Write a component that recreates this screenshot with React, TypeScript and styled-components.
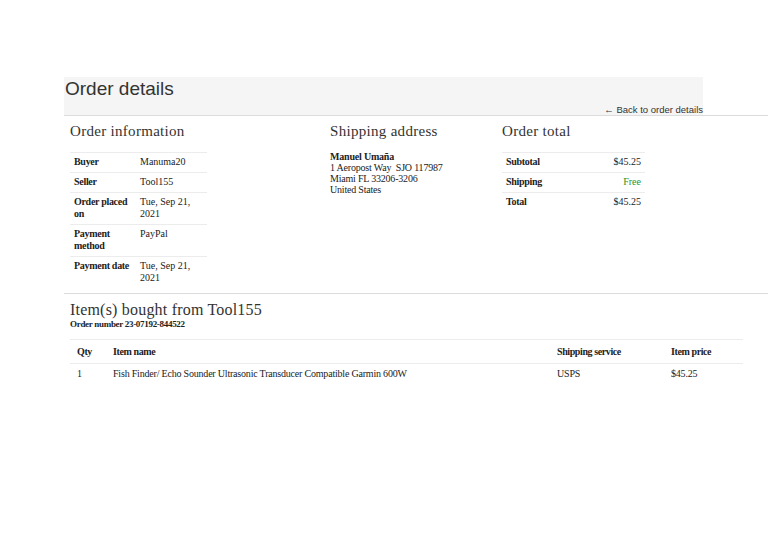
import React from "react";
import styled, { createGlobalStyle } from "styled-components";

const Global = createGlobalStyle`
  html, body { margin: 0; padding: 0; background: #fff; }
  body { font-family: "Liberation Serif", "Times New Roman", serif; color: #222; overflow: hidden; }
`;

const Page = styled.div`
  padding: 77px 0 0 64px;
  width: 704px;
`;

const HeaderSection = styled.div`
  border-bottom: 1px solid #dcdcdc;
`;

const HeaderBand = styled.div`
  width: 639px;
  height: 38px;
  background: #f5f5f5;
  display: flex;
  flex-direction: column;
`;

const Title = styled.h1`
  margin: 0;
  padding: 1px 0 0 1px;
  font-family: "Liberation Sans", Arial, sans-serif;
  font-weight: normal;
  font-size: 19px;
  line-height: 22px;
  color: #333;
`;

const BackLink = styled.a`
  align-self: flex-end;
  margin-top: 4px;
  font-family: "Liberation Sans", Arial, sans-serif;
  font-size: 9.5px;
  line-height: 12px;
  color: #333;
  text-decoration: none;
`;

const Columns = styled.div`
  display: flex;
  padding: 5px 0 5px 6px;
  border-bottom: 1px solid #dcdcdc;
`;

const Column = styled.div<{ $w: number }>`
  width: ${(p) => p.$w}px;
  flex: none;
`;

const SectionTitle = styled.h2`
  margin: 0;
  font-weight: normal;
  font-size: 15px;
  line-height: 20px;
  letter-spacing: 0.3px;
  color: #333;
`;

const InfoTable = styled.table<{ $w: number }>`
  width: ${(p) => p.$w}px;
  border-collapse: collapse;
  margin-top: 11px;
  font-size: 10px;
  line-height: 12px;
`;

const Row = styled.tr`
  border-top: 1px solid #ececec;
`;

const Label = styled.td<{ $w?: number }>`
  font-weight: bold;
  padding: 3px 4px 4px 4px;
  vertical-align: top;
  width: ${(p) => (p.$w ? `${p.$w}px` : "auto")};
  letter-spacing: -0.3px;
`;

const Value = styled.td<{ $right?: boolean; $green?: boolean }>`
  padding: 3px 4px 4px 2px;
  vertical-align: top;
  text-align: ${(p) => (p.$right ? "right" : "left")};
  color: ${(p) => (p.$green ? "#1f961f" : "#222")};
`;

const Address = styled.div`
  margin-top: 10px;
  font-size: 10px;
  line-height: 11px;
  letter-spacing: -0.2px;
`;

const Bold = styled.div`
  font-weight: bold;
`;

const ItemsSection = styled.div`
  padding: 7px 0 0 6px;
`;

const ItemsTitle = styled.h2`
  margin: 0;
  font-weight: normal;
  font-size: 16px;
  line-height: 18px;
  letter-spacing: 0.2px;
  color: #333;
`;

const OrderNumber = styled.div`
  font-size: 9px;
  font-weight: bold;
  line-height: 10px;
  letter-spacing: -0.3px;
`;

const ItemsTable = styled.table`
  width: 673px;
  margin-top: 10px;
  border-collapse: collapse;
  table-layout: fixed;
  font-size: 10px;
  line-height: 12px;
`;

const HeadCell = styled.th<{ $w?: number }>`
  text-align: left;
  font-weight: bold;
  padding: 6px 6px 5px 7px;
  letter-spacing: -0.4px;
  width: ${(p) => (p.$w ? `${p.$w}px` : "auto")};
`;

const Cell = styled.td`
  padding: 4px 6px 5px 7px;
  letter-spacing: -0.2px;
  white-space: nowrap;
`;

const TRow = styled.tr`
  border-top: 1px solid #ececec;
`;

export default function App() {
  return (
    <>
      <Global />
      <Page>
        <HeaderSection>
          <HeaderBand>
            <Title>Order details</Title>
            <BackLink href="#">← Back to order details</BackLink>
          </HeaderBand>
        </HeaderSection>
        <Columns>
          <Column $w={260}>
            <SectionTitle>Order information</SectionTitle>
            <InfoTable $w={137}>
              <tbody>
                <Row>
                  <Label $w={60}>Buyer</Label>
                  <Value>Manuma20</Value>
                </Row>
                <Row>
                  <Label>Seller</Label>
                  <Value>Tool155</Value>
                </Row>
                <Row>
                  <Label>Order placed on</Label>
                  <Value>Tue, Sep 21, 2021</Value>
                </Row>
                <Row>
                  <Label>Payment method</Label>
                  <Value>PayPal</Value>
                </Row>
                <Row>
                  <Label>Payment date</Label>
                  <Value>Tue, Sep 21, 2021</Value>
                </Row>
              </tbody>
            </InfoTable>
          </Column>
          <Column $w={172}>
            <SectionTitle>Shipping address</SectionTitle>
            <Address>
              <Bold>Manuel Umaña</Bold>
              <div>1 Aeropost Way&nbsp; SJO 117987</div>
              <div>Miami FL 33206-3206</div>
              <div>United States</div>
            </Address>
          </Column>
          <Column $w={150}>
            <SectionTitle>Order total</SectionTitle>
            <InfoTable $w={143}>
              <tbody>
                <Row>
                  <Label>Subtotal</Label>
                  <Value $right>$45.25</Value>
                </Row>
                <Row>
                  <Label>Shipping</Label>
                  <Value $right $green>Free</Value>
                </Row>
                <Row>
                  <Label>Total</Label>
                  <Value $right>$45.25</Value>
                </Row>
              </tbody>
            </InfoTable>
          </Column>
        </Columns>
        <ItemsSection>
          <ItemsTitle>Item(s) bought from Tool155</ItemsTitle>
          <OrderNumber>Order number 23-07192-844522</OrderNumber>
          <ItemsTable>
            <thead>
              <TRow>
                <HeadCell $w={23}>Qty</HeadCell>
                <HeadCell>Item name</HeadCell>
                <HeadCell $w={101}>Shipping service</HeadCell>
                <HeadCell $w={66}>Item price</HeadCell>
              </TRow>
            </thead>
            <tbody>
              <TRow>
                <Cell>1</Cell>
                <Cell>Fish Finder/ Echo Sounder Ultrasonic Transducer Compatible Garmin 600W</Cell>
                <Cell>USPS</Cell>
                <Cell>$45.25</Cell>
              </TRow>
            </tbody>
          </ItemsTable>
        </ItemsSection>
      </Page>
    </>
  );
}
